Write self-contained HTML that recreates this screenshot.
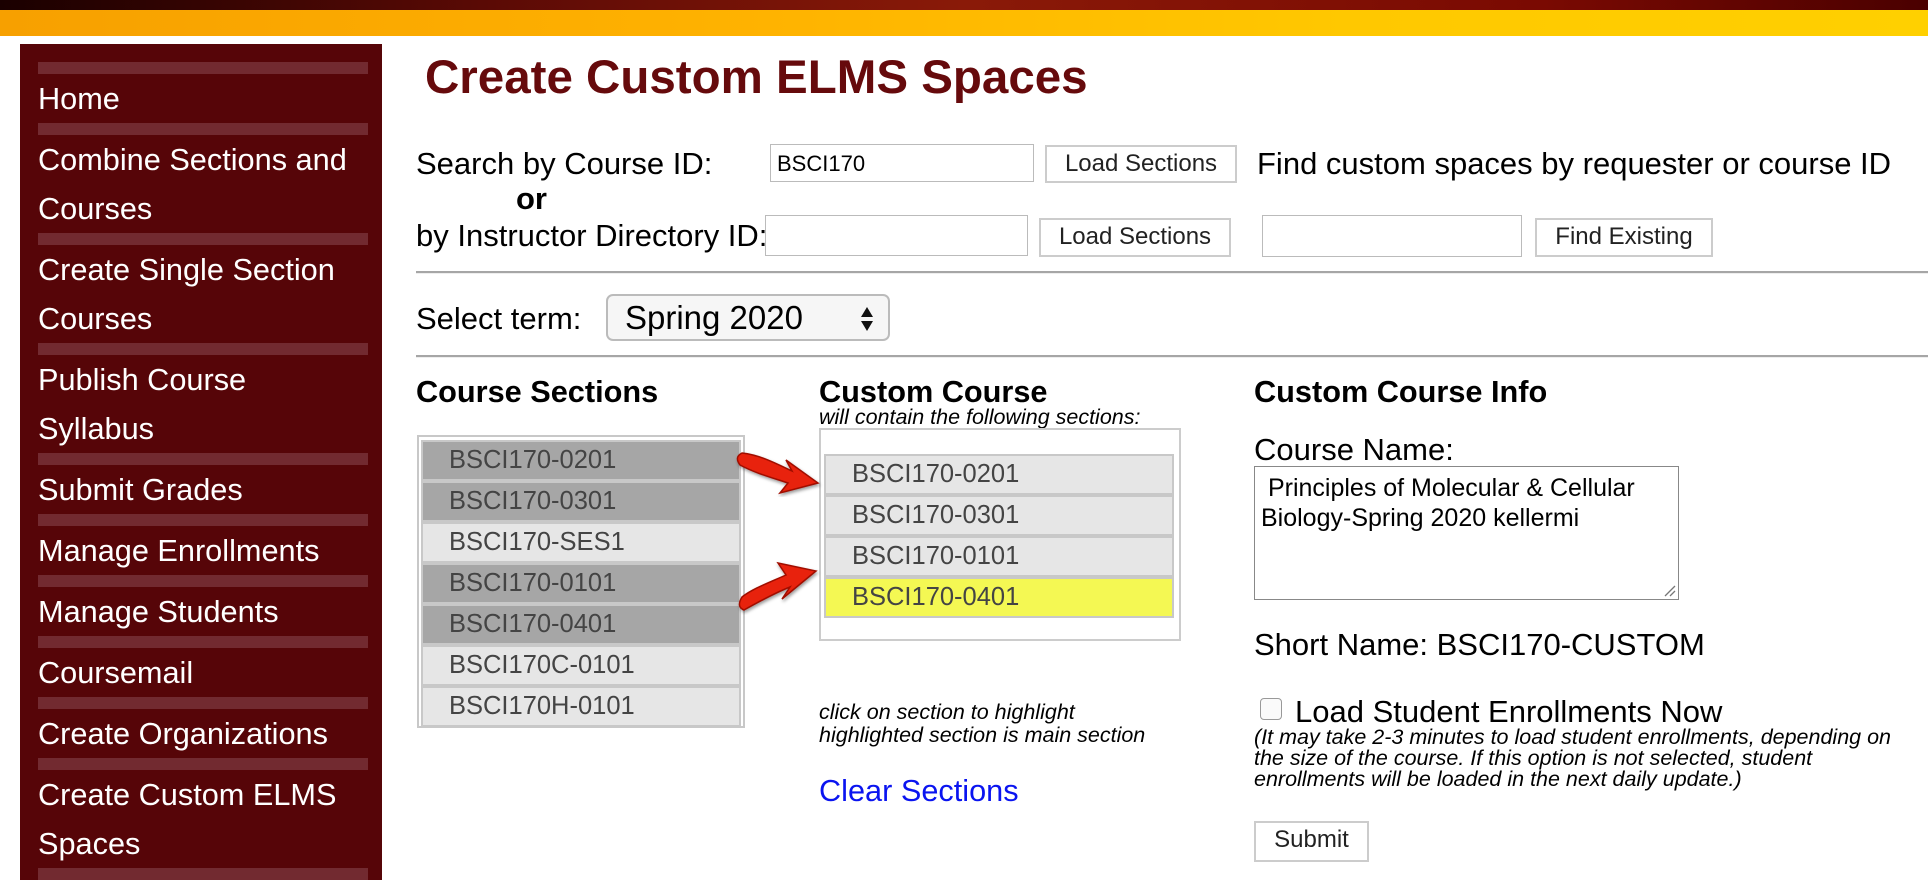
<!DOCTYPE html>
<html><head><meta charset="utf-8"><style>
*{margin:0;padding:0;box-sizing:border-box}
body{width:1928px;height:880px;overflow:hidden;background:#fff;font-family:"Liberation Sans",Arial,sans-serif;position:relative;color:#000}
.a{position:absolute;white-space:nowrap}
#top1{left:0;top:0;width:1928px;height:10px;background:linear-gradient(90deg,#1a0000,#5a0a05 25%,#8a1a08 50%,#7a0a02 80%,#4a0000)}
#top2{left:0;top:10px;width:1928px;height:26px;background:linear-gradient(90deg,#f7a000,#ffb300 40%,#ffc800 70%,#ffd000)}
#side{left:20px;top:44px;width:362px;height:836px;background:#560508}
#side .sep{height:12px;background:#722a30;margin:0 14px 0 18px}
#side .it{color:#fff;font-size:30.7px;line-height:49px;padding-left:18px}
.lbl{font-size:31px}
.inp{position:absolute;border:1px solid #bbb;background:#fff;font-size:22px;padding:0 6px;line-height:38px}
.btn{position:absolute;border:2px solid #ccc;background:#fff;font-size:24px;color:#222;text-align:center;line-height:34px}
.hr{position:absolute;left:416px;width:1512px;height:3px;background:#a6a6a6;border-bottom:1px solid #eee}
.item{position:absolute;border:2px solid #c8c8c8;font-size:25.5px;color:#444;padding-left:26px;line-height:36px}
.d{background:#a6a6a6}.l{background:#e6e6e6}
h2{position:absolute;font-size:30.7px;font-weight:bold}
.it2{font-style:italic;font-size:21.5px}
</style></head><body>
<div id="top1" class="a"></div><div id="top2" class="a"></div>
<div id="side" class="a" style="padding-top:18px">
<div class="sep"></div><div class="it">Home</div>
<div class="sep"></div><div class="it">Combine Sections and<br>Courses</div>
<div class="sep"></div><div class="it">Create Single Section<br>Courses</div>
<div class="sep"></div><div class="it">Publish Course<br>Syllabus</div>
<div class="sep"></div><div class="it">Submit Grades</div>
<div class="sep"></div><div class="it">Manage Enrollments</div>
<div class="sep"></div><div class="it">Manage Students</div>
<div class="sep"></div><div class="it">Coursemail</div>
<div class="sep"></div><div class="it">Create Organizations</div>
<div class="sep"></div><div class="it">Create Custom ELMS<br>Spaces</div>
<div class="sep"></div>
</div>
<div class="a" style="left:425px;top:50px;font-size:47.5px;font-weight:bold;color:#660a0c">Create Custom ELMS Spaces</div>

<div class="a lbl" style="left:416px;top:146px">Search by Course ID:</div>
<div class="inp" style="left:770px;top:144px;width:264px;height:38px">BSCI170</div>
<div class="btn" style="left:1045px;top:145px;width:192px;height:38px">Load Sections</div>
<div class="a lbl" style="left:1257px;top:146px">Find custom spaces by requester or course ID</div>
<div class="a lbl" style="left:516px;top:181px;font-weight:bold">or</div>
<div class="a lbl" style="left:416px;top:218px">by Instructor Directory ID:</div>
<div class="inp" style="left:765px;top:215px;width:263px;height:41px"></div>
<div class="btn" style="left:1039px;top:218px;width:192px;height:39px">Load Sections</div>
<div class="inp" style="left:1262px;top:215px;width:260px;height:42px"></div>
<div class="btn" style="left:1535px;top:218px;width:178px;height:39px">Find Existing</div>
<div class="hr" style="top:271px"></div>

<div class="a lbl" style="left:416px;top:301px">Select term:</div>
<div class="a" style="left:606px;top:294px;width:284px;height:47px;border:2px solid #bbb;border-radius:7px;background:#f6f6f6;font-size:33px;line-height:43px;padding-left:17px">Spring 2020
<svg style="position:absolute;right:14px;top:10px" width="14" height="26"><path d="M7 1L13 11H1Z M7 25L13 15H1Z" fill="#111"/></svg></div>
<div class="hr" style="top:355px"></div>

<h2 style="left:416px;top:374px">Course Sections</h2>
<h2 style="left:819px;top:374px">Custom Course</h2>
<div class="a it2" style="left:819px;top:405px">will contain the following sections:</div>
<h2 style="left:1254px;top:374px">Custom Course Info</h2>

<div class="a" style="left:417px;top:435px;width:328px;height:293px;border:2px solid #c8c8c8"></div>
<div class="item d" style="left:421px;top:440px;width:320px;height:41px">BSCI170-0201</div>
<div class="item d" style="left:421px;top:481px;width:320px;height:41px">BSCI170-0301</div>
<div class="item l" style="left:421px;top:522px;width:320px;height:41px">BSCI170-SES1</div>
<div class="item d" style="left:421px;top:563px;width:320px;height:41px">BSCI170-0101</div>
<div class="item d" style="left:421px;top:604px;width:320px;height:41px">BSCI170-0401</div>
<div class="item l" style="left:421px;top:645px;width:320px;height:41px">BSCI170C-0101</div>
<div class="item l" style="left:421px;top:686px;width:320px;height:41px">BSCI170H-0101</div>

<div class="a" style="left:819px;top:428px;width:362px;height:213px;border:2px solid #ccc"></div>
<div class="item l" style="left:824px;top:454px;width:350px;height:41px">BSCI170-0201</div>
<div class="item l" style="left:824px;top:495px;width:350px;height:41px">BSCI170-0301</div>
<div class="item l" style="left:824px;top:536px;width:350px;height:41px">BSCI170-0101</div>
<div class="item" style="left:824px;top:577px;width:350px;height:41px;background:#f4f853">BSCI170-0401</div>

<svg class="a" style="left:730px;top:435px" width="100" height="190">
<defs><filter id="s"><feDropShadow dx="1" dy="2" stdDeviation="1.5" flood-opacity=".4"/></filter></defs>
<path d="M12 18 C30 20 45 28 62 36 L56 25 L88 48 L50 58 L58 48 C40 42 25 38 10 30 Q4 22 12 18Z" fill="#e8200a" stroke="#a01000" stroke-width="1.5" filter="url(#s)"/>
<path d="M14 175 C30 166 45 158 60 152 L52 164 L86 136 L48 128 L56 140 C38 148 22 154 12 162 Q6 172 14 175Z" fill="#e8200a" stroke="#a01000" stroke-width="1.5" filter="url(#s)"/>
</svg>

<div class="a it2" style="left:819px;top:701px;line-height:23px">click on section to highlight<br>highlighted section is main section</div>
<div class="a" style="left:819px;top:773px;font-size:30.7px;color:#0a14f0">Clear Sections</div>

<div class="a lbl" style="left:1254px;top:432px">Course Name:</div>
<div class="a" style="left:1254px;top:466px;width:425px;height:134px;border:1px solid #888;font-size:25px;line-height:30px;padding:6px 6px 0 6px;white-space:normal">&nbsp;Principles of Molecular &amp; Cellular<br>Biology-Spring 2020 kellermi
<svg style="position:absolute;right:2px;bottom:2px" width="14" height="14"><path d="M13 3L3 13M13 8L8 13" stroke="#777" stroke-width="1.3"/></svg></div>
<div class="a lbl" style="left:1254px;top:627px">Short Name: BSCI170-CUSTOM</div>
<div class="a" style="left:1260px;top:698px;width:22px;height:22px;border:1px solid #999;border-radius:4px;background:#fafafa"></div>
<div class="a lbl" style="left:1295px;top:694px">Load Student Enrollments Now</div>
<div class="a it2" style="left:1254px;top:727px;line-height:21px">(It may take 2-3 minutes to load student enrollments, depending on<br>the size of the course. If this option is not selected, student<br>enrollments will be loaded in the next daily update.)</div>
<div class="btn" style="left:1254px;top:821px;width:115px;height:41px">Submit</div>
</body></html>
